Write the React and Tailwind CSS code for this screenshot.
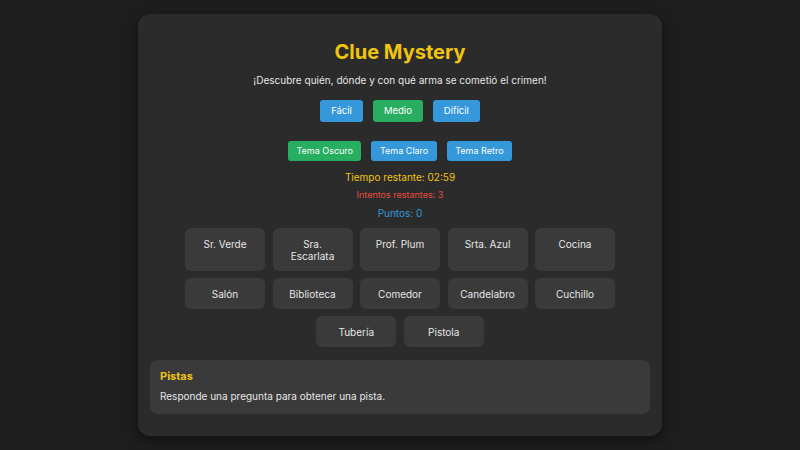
import React from 'react';

const DIFFICULTIES = [
  { label: 'Fácil', bg: 'bg-[#3498db]' },
  { label: 'Medio', bg: 'bg-[#27ae60]' },
  { label: 'Difícil', bg: 'bg-[#3498db]' },
];

const THEMES = [
  { label: 'Tema Oscuro', bg: 'bg-[#27ae60]' },
  { label: 'Tema Claro', bg: 'bg-[#3498db]' },
  { label: 'Tema Retro', bg: 'bg-[#3498db]' },
];

const CARDS = [
  'Sr. Verde',
  'Sra. Escarlata',
  'Prof. Plum',
  'Srta. Azul',
  'Cocina',
  'Salón',
  'Biblioteca',
  'Comedor',
  'Candelabro',
  'Cuchillo',
  'Tubería',
  'Pistola',
];

export default function App() {
  return (
    <div
      className="w-[800px] h-[450px] bg-[#1e1e1e] flex justify-center pt-[14px]"
      style={{ fontFamily: 'Inter, "Noto Sans", sans-serif' }}
    >
      <div className="w-[524px] h-[422px] bg-[#2b2b2b] rounded-[12px] shadow-[0_4px_14px_rgba(0,0,0,0.5)] px-[12px] pt-[24px] flex flex-col items-center">
        <h1 className="text-[20px] leading-[28px] font-bold text-[#f1c40f]">Clue Mystery</h1>
        <p className="mt-[7px] text-[10px] leading-[14px] text-[#e6e6e6]">
          ¡Descubre quién, dónde y con qué arma se cometió el crimen!
        </p>

        <div className="mt-[13px] flex gap-[10px]">
          {DIFFICULTIES.map((d) => (
            <button
              key={d.label}
              className={`h-[22px] px-[11px] rounded-[3px] text-[9.5px] text-white ${d.bg}`}
            >
              {d.label}
            </button>
          ))}
        </div>

        <div className="mt-[19px] flex gap-[10px]">
          {THEMES.map((t) => (
            <button
              key={t.label}
              className={`h-[20px] px-[8.5px] rounded-[3px] text-[9px] text-white ${t.bg}`}
            >
              {t.label}
            </button>
          ))}
        </div>

        <p className="mt-[9px] text-[10px] leading-[14px] text-[#f1c40f]">Tiempo restante: 02:59</p>
        <p className="mt-[4px] text-[9px] leading-[14px] text-[#e74c3c]">Intentos restantes: 3</p>
        <p className="mt-[4px] text-[10px] leading-[14px] text-[#3498db]">Puntos: 0</p>

        <div className="mt-[8px] w-[430px] flex flex-wrap justify-center gap-x-[7.5px] gap-y-[7px]">
          {CARDS.map((c) => (
            <div
              key={c}
              className="w-[80px] bg-[#3a3a3a] rounded-[6px] px-[10px] py-[9.5px] text-center text-[10px] leading-[12px] text-[#e6e6e6]"
            >
              {c}
            </div>
          ))}
        </div>

        <div className="mt-[13px] w-full h-[54px] bg-[#3a3a3a] rounded-[8px] px-[10px] pt-[9px]">
          <h2 className="text-[11px] leading-[14px] font-bold text-[#f1c40f]">Pistas</h2>
          <p className="mt-[6px] text-[10px] leading-[14px] text-[#e6e6e6]">
            Responde una pregunta para obtener una pista.
          </p>
        </div>
      </div>
    </div>
  );
}
